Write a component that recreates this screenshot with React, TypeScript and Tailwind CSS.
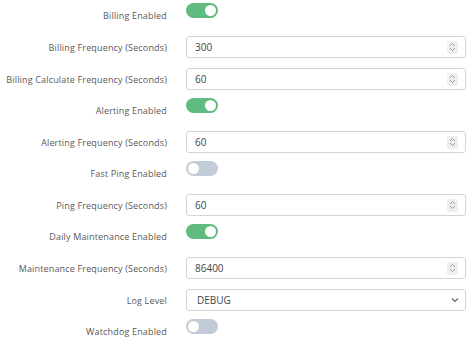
type Row =
  | { kind: "toggle"; label: string; on: boolean }
  | { kind: "number"; label: string; value: string }
  | { kind: "select"; label: string; value: string };

const rows: Row[] = [
  { kind: "toggle", label: "Billing Enabled", on: true },
  { kind: "number", label: "Billing Frequency (Seconds)", value: "300" },
  { kind: "number", label: "Billing Calculate Frequency (Seconds)", value: "60" },
  { kind: "toggle", label: "Alerting Enabled", on: true },
  { kind: "number", label: "Alerting Frequency (Seconds)", value: "60" },
  { kind: "toggle", label: "Fast Ping Enabled", on: false },
  { kind: "number", label: "Ping Frequency (Seconds)", value: "60" },
  { kind: "toggle", label: "Daily Maintenance Enabled", on: true },
  { kind: "number", label: "Maintenance Frequency (Seconds)", value: "86400" },
  { kind: "select", label: "Log Level", value: "DEBUG" },
  { kind: "toggle", label: "Watchdog Enabled", on: false },
];

function Toggle({ on }: { on: boolean }) {
  return (
    <div
      className={
        "flex h-[15px] w-[32px] items-center rounded-full px-[2px] " +
        (on ? "justify-end bg-[#5fbb7f]" : "justify-start bg-[#c2cbd8]")
      }
    >
      <div className="h-[11px] w-[11px] rounded-full bg-white" />
    </div>
  );
}

function Spinner() {
  return (
    <div className="flex h-[13px] w-[11px] flex-col items-center justify-center rounded-[2px] bg-[#efefef]">
      <svg width="7" height="10" viewBox="0 0 7 10" fill="none" stroke="#9a9a9a" strokeWidth="1">
        <path d="M1 4 L3.5 1.5 L6 4" />
        <path d="M1 6 L3.5 8.5 L6 6" />
      </svg>
    </div>
  );
}

export default function App() {
  return (
    <div className="h-[345px] w-[474px] bg-white pt-[5px] font-['Open_Sans',sans-serif]">
      {rows.map((r) => (
        <div
          key={r.label}
          className={"mb-[10px] flex items-center " + (r.kind === "toggle" ? "h-[21px]" : "h-[22px]")}
        >
          <div className="w-[167px] text-right text-[9px] leading-none tracking-[0.16px] text-[#595959]">
            {r.label}
          </div>
          <div className={"ml-[19px] w-[280px] " + (r.kind === "toggle" ? "-mt-[2px] self-start" : "")}>
            {r.kind === "toggle" && <Toggle on={r.on} />}
            {r.kind === "number" && (
              <div className="flex h-[22px] items-center justify-between rounded-[3px] border border-[#d4d4d4] pl-[8px] pr-[7px] text-[10px] text-[#444]">
                <span>{r.value}</span>
                <Spinner />
              </div>
            )}
            {r.kind === "select" && (
              <div className="flex h-[22px] items-center justify-between rounded-[3px] border border-[#d4d4d4] pl-[10px] pr-[6px] text-[10px] text-[#444]">
                <span>{r.value}</span>
                <svg width="8" height="6" viewBox="0 0 8 6" fill="none" stroke="#666" strokeWidth="1.2">
                  <path d="M1 1.5 L4 4.5 L7 1.5" />
                </svg>
              </div>
            )}
          </div>
        </div>
      ))}
    </div>
  );
}
